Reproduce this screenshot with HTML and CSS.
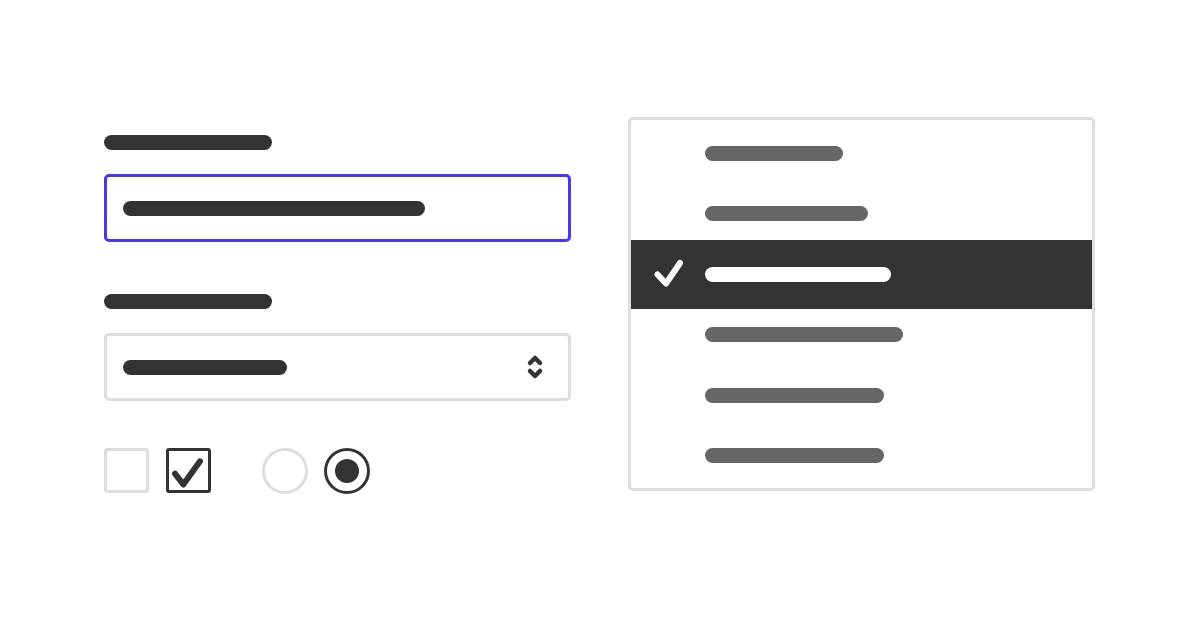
FILE: index.html
```html
<!DOCTYPE html>
<html lang="en">
<head>
<meta charset="utf-8">
<title>Form controls</title>
<link rel="stylesheet" href="styles.css">
</head>
<body>
<main class="stage">
  <section class="form">
    <div class="label"></div>
    <div class="input input--focus"><span class="bar bar--dark bar--w302"></span></div>
    <div class="label"></div>
    <div class="input select">
      <span class="bar bar--dark bar--w164"></span>
      <svg class="chevron" width="20" height="28" viewBox="0 0 20 28" aria-hidden="true">
        <polyline points="5,10 10,5 15,10" />
        <polyline points="5,18 10,23 15,18" />
      </svg>
    </div>
    <div class="toggles">
      <span class="box"></span>
      <span class="box box--checked">
        <svg width="39" height="39" viewBox="0 0 39 39" aria-hidden="true"><polyline points="6,22.7 14.3,33.5 31,10.3" /></svg>
      </span>
      <span class="radio radio--first"></span>
      <span class="radio radio--checked"><span class="dot"></span></span>
    </div>
  </section>

  <section class="menu">
    <div class="option"><span class="tick"></span><span class="bar bar--grey" style="width:138px"></span></div>
    <div class="option"><span class="tick"></span><span class="bar bar--grey" style="width:163px"></span></div>
    <div class="option option--selected">
      <span class="tick"><svg width="34" height="34" viewBox="0 0 34 34" aria-hidden="true"><polyline points="4.5,17.5 13,26.5 27,6" /></svg></span>
      <span class="bar bar--white" style="width:186px"></span>
    </div>
    <div class="option"><span class="tick"></span><span class="bar bar--grey" style="width:198px"></span></div>
    <div class="option"><span class="tick"></span><span class="bar bar--grey" style="width:179px"></span></div>
    <div class="option"><span class="tick"></span><span class="bar bar--grey" style="width:179px"></span></div>
  </section>
</main>
</body>
</html>
```

FILE: styles.css
```css
* { box-sizing: border-box; }

html, body {
  margin: 0;
  padding: 0;
  background: #ffffff;
  font-family: "Liberation Sans", Arial, sans-serif;
}

.stage {
  width: 1200px;
  height: 630px;
  display: flex;
  align-items: flex-start;
  gap: 57px;
  padding: 117px 0 0 104px;
}

.form {
  width: 467px;
  display: flex;
  flex-direction: column;
  margin-top: 18px;
}

.label {
  width: 168px;
  height: 15px;
  border-radius: 8px;
  background: #333333;
  margin-bottom: 24px;
}

.bar {
  display: block;
  height: 15px;
  border-radius: 8px;
}
.bar--dark { background: #333333; }
.bar--grey { background: #666666; }
.bar--white { background: #ffffff; }
.bar--w302 { width: 302px; }
.bar--w164 { width: 164px; }

.input {
  height: 68px;
  border: 3px solid #dddddd;
  border-radius: 5px;
  display: flex;
  align-items: center;
  padding: 0 16px;
  margin-bottom: 52px;
}
.input--focus {
  border-color: #4a3adb;
}

.select {
  justify-content: space-between;
  padding-right: 23px;
  margin-bottom: 46px;
}

.chevron polyline {
  fill: none;
  stroke: #333333;
  stroke-width: 4.5;
  stroke-linecap: round;
  stroke-linejoin: round;
}

.toggles {
  display: flex;
  align-items: center;
  height: 47px;
}

.box {
  width: 45px;
  height: 45px;
  border: 3px solid #dddddd;
  border-radius: 3px;
  margin-right: 17px;
  display: flex;
}
.box--checked {
  border-color: #333333;
  margin-right: 51px;
}
.box--checked polyline,
.tick polyline {
  fill: none;
  stroke-width: 6;
  stroke-linecap: round;
  stroke-linejoin: round;
}
.box--checked polyline { stroke: #333333; }
.tick polyline { stroke: #ffffff; }

.radio {
  width: 46px;
  height: 46px;
  border: 3px solid #dddddd;
  border-radius: 50%;
  display: flex;
  align-items: center;
  justify-content: center;
}
.radio--first { margin-right: 16px; }
.radio--checked { border-color: #333333; }
.dot {
  width: 24px;
  height: 24px;
  border-radius: 50%;
  background: #333333;
}

.menu {
  width: 467px;
  border: 3px solid #dddddd;
  border-radius: 5px;
  padding: 3px 0 2px;
  display: flex;
  flex-direction: column;
}

.option {
  height: 60.5px;
  display: flex;
  align-items: center;
  padding-left: 22px;
}
.option--selected {
  height: 68.5px;
  margin: -4px 0;
  background: #333333;
}

.tick {
  width: 34px;
  height: 34px;
  margin-right: 18px;
  display: flex;
}
```
